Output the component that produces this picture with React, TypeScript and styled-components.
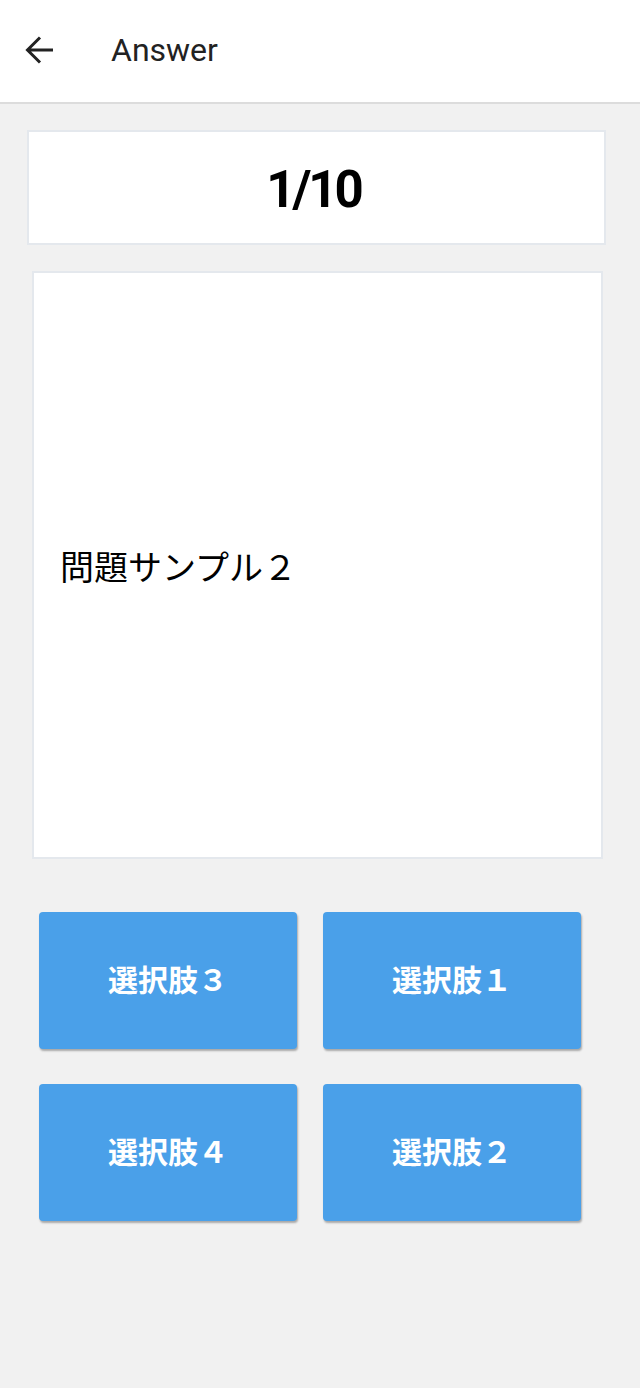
import styled, { createGlobalStyle } from "styled-components";

const choices = ["選択肢３", "選択肢１", "選択肢４", "選択肢２"];

export default function App() {
  return (
    <Page>
      <GlobalStyle />
      <Header>
        <BackButton aria-label="back">
          <svg width="30" height="30" viewBox="0 0 30 30" fill="none">
            <path
              d="M28 15H3.5M15 2.5L2.5 15L15 27.5"
              stroke="#222"
              strokeWidth="3"
            />
          </svg>
        </BackButton>
        <Title>Answer</Title>
      </Header>
      <Main>
        <CounterCard>1/10</CounterCard>
        <QuestionCard>問題サンプル２</QuestionCard>
        <ChoiceGrid>
          {choices.map((c) => (
            <ChoiceButton key={c}>{c}</ChoiceButton>
          ))}
        </ChoiceGrid>
      </Main>
    </Page>
  );
}

const GlobalStyle = createGlobalStyle`
  html, body {
    margin: 0;
    padding: 0;
    background: #f1f1f1;
  }
  * {
    box-sizing: border-box;
  }
`;

const Page = styled.div`
  width: 640px;
  min-height: 1388px;
  background: #f1f1f1;
  font-family: Roboto, "Noto Sans CJK JP", sans-serif;
`;

const Header = styled.header`
  height: 104px;
  background: #fff;
  border-bottom: 2px solid #dcdcdc;
  display: flex;
  align-items: center;
  padding-left: 25px;
`;

const BackButton = styled.button`
  width: 30px;
  height: 30px;
  padding: 0;
  border: none;
  background: none;
  display: flex;
  align-items: center;
  justify-content: center;
  margin-top: -3px;
`;

const Title = styled.h1`
  margin: 0 0 0 56px;
  font-size: 32px;
  font-weight: 400;
  color: #222;
  margin-top: -3px;
`;

const Main = styled.main`
  padding-top: 26px;
`;

const CounterCard = styled.div`
  margin-left: 27px;
  width: 579px;
  height: 115px;
  background: #fff;
  border: 2px solid #e4e8ed;
  display: flex;
  align-items: center;
  justify-content: center;
  font-family: Roboto, sans-serif;
  font-weight: 700;
  font-size: 51px;
  letter-spacing: -3px;
  color: #000;
  padding: 3px 6px 0 0;
`;

const QuestionCard = styled.div`
  margin: 26px 0 0 32px;
  width: 571px;
  height: 588px;
  background: #fff;
  border: 2px solid #e4e8ed;
  display: flex;
  align-items: center;
  padding: 0 0 0 26px;
  font-family: "Noto Sans CJK JP", sans-serif;
  font-size: 34px;
  color: #000;
`;

const ChoiceGrid = styled.div`
  margin: 53px 0 0 39px;
  display: grid;
  grid-template-columns: 258px 258px;
  column-gap: 26px;
  row-gap: 35px;
`;

const ChoiceButton = styled.button`
  height: 137px;
  border: none;
  border-radius: 4px;
  background: #4aa0e9;
  box-shadow: 1px 2px 2px rgba(0, 0, 0, 0.3);
  color: #fff;
  font-family: "Noto Sans CJK JP", sans-serif;
  font-size: 30px;
  font-weight: 700;
  padding: 0 0 6px;
`;
